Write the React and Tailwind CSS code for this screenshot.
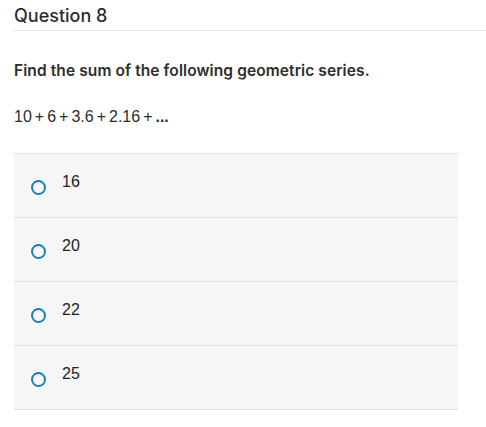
export default function App() {
  const options = ["16", "20", "22", "25"];
  const arial = { fontFamily: "'Liberation Sans', Arial, sans-serif" };
  return (
    <div className="w-[486px] h-[427px] bg-white overflow-hidden" style={{ fontFamily: "Inter, 'Liberation Sans', sans-serif" }}>
      <div className="pl-[14px]">
        <div className="h-[31px] border-b border-[#e3e3e3] pt-[5px]">
          <div className="text-[18px] leading-[22px] font-medium text-[#2d2d2d]">Question 8</div>
        </div>
        <div className="pt-[31px] text-[15.5px] leading-[18px] font-semibold text-[#2d2d2d] tracking-[0.1px]">
          Find the sum of the following geometric series.
        </div>
        <div className="pt-[28px] text-[16px] leading-[18px] text-[#2d2d2d]" style={arial}>
          10<span className="mx-[3px]">+</span>6<span className="mx-[3px]">+</span>3.6<span className="mx-[3px]">+</span>2.16<span className="mx-[3px]">+</span><span className="font-bold">...</span>
        </div>
        <div className="mt-[27px] w-[444px] border-t border-[#e0e0e0] bg-[#f6f6f6]">
          {options.map((o) => (
            <div key={o} className="h-[64px] border-b border-[#e0e0e0] flex items-start pl-[17px] pt-[18px]">
              <div className="mt-[8px] w-[15px] h-[15px] rounded-full border-2 border-[#1a7ec6]" />
              <div className="ml-[16px] text-[16px] leading-[20px] text-[#222]" style={arial}>{o}</div>
            </div>
          ))}
        </div>
      </div>
    </div>
  );
}
